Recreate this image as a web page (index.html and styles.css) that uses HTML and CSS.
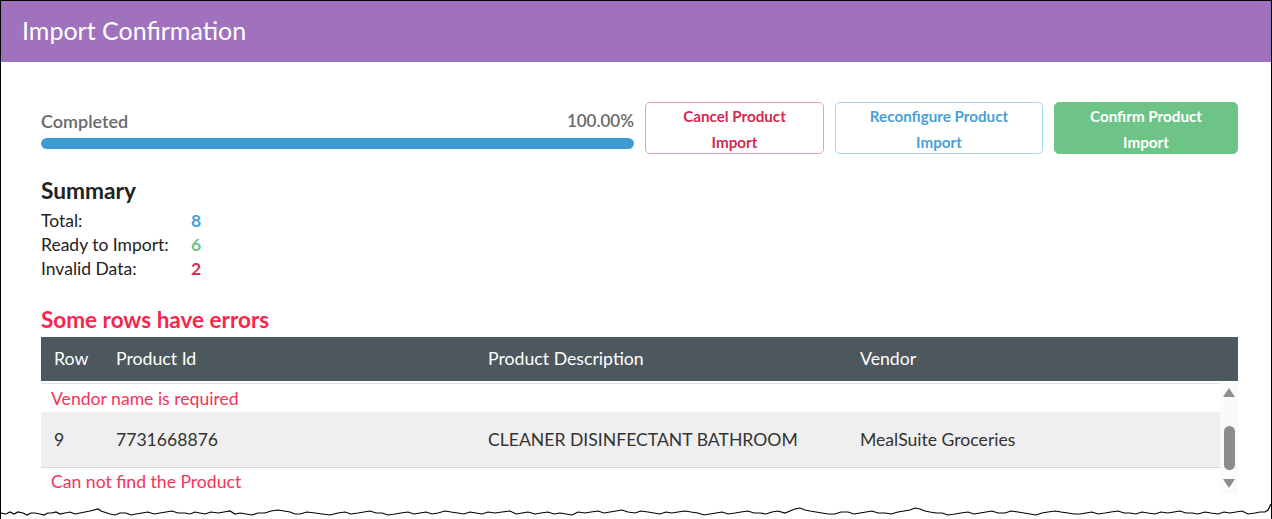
FILE: index.html
```html
<!DOCTYPE html>
<html>
<head>
<meta charset="utf-8">
<link rel="stylesheet" href="styles.css">
</head>
<body>
<div class="frame">
  <header class="titlebar">Import Confirmation</header>
  <main class="content">
    <section class="toprow">
      <div class="progress">
        <div class="progress-labels"><span>Completed</span><span>100.00%</span></div>
        <div class="bar"><div class="bar-fill"></div></div>
      </div>
      <button class="btn btn-cancel">Cancel Product<br>Import</button>
      <button class="btn btn-reconf">Reconfigure Product<br>Import</button>
      <button class="btn btn-confirm">Confirm Product<br>Import</button>
    </section>

    <h2 class="summary-title">Summary</h2>
    <dl class="summary">
      <dt>Total:</dt><dd class="v-blue">8</dd>
      <dt>Ready to Import:</dt><dd class="v-green">6</dd>
      <dt>Invalid Data:</dt><dd class="v-red">2</dd>
    </dl>

    <h2 class="errors-title">Some rows have errors</h2>

    <div class="table">
      <div class="thead row-grid">
        <div class="cell">Row</div>
        <div class="cell">Product Id</div>
        <div class="cell">Product Description</div>
        <div class="cell">Vendor</div>
      </div>
      <div class="scroll">
        <div class="scroll-body">
          <div class="err err-first">Vendor name is required</div>
          <div class="drow row-grid">
            <div class="cell">9</div>
            <div class="cell">7731668876</div>
            <div class="cell">CLEANER DISINFECTANT BATHROOM</div>
            <div class="cell">MealSuite Groceries</div>
          </div>
          <div class="err">Can not find the Product</div>
        </div>
        <div class="sbar">
          <div class="arrow-up"></div>
          <div class="thumb"></div>
          <div class="arrow-down"></div>
        </div>
      </div>
    </div>
  </main>
  <svg class="tear" viewBox="0 0 1272 19" width="1272" height="19" preserveAspectRatio="none">
    <polygon fill="#fff" points="0,12 6,13 10,11 14,13 18,11 23,12 27,14 31,12 35,12 40,13 44,14 48,12 52,12 56,11 60,13 65,12 70,11 75,13 80,12 85,11 90,10 94,9 98,8 101,10 104,11 110,13 115,14 120,12 126,12 131,14 136,13 142,12 148,11 154,13 160,12 166,11 172,10 178,12 185,12 190,13 195,11 200,12 205,13 211,11 218,12 224,11 230,10 235,13 240,12 246,13 252,14 258,12 265,12 271,10 278,9 284,10 290,11 295,13 300,13 307,11 315,12 322,13 330,14 338,12 345,11 351,13 358,12 364,11 370,10 376,12 382,12 388,14 395,13 401,12 408,11 414,13 420,12 426,11 432,13 438,12 445,10 451,11 458,12 464,13 470,11 476,12 482,13 488,11 495,12 502,11 510,10 516,13 522,12 528,11 535,13 541,12 548,11 554,13 560,12 566,13 572,14 578,11 585,12 591,11 598,10 604,12 610,11 616,10 622,9 628,11 635,12 641,10 648,11 654,12 660,13 666,11 672,12 678,11 685,10 691,11 698,12 704,14 710,13 716,12 722,11 728,13 735,12 741,11 748,10 754,12 760,12 766,13 772,11 778,10 785,12 790,10 795,8 800,7 805,9 810,10 816,11 822,12 828,13 835,13 841,11 848,11 854,13 860,12 866,11 872,10 878,12 885,12 891,13 898,11 904,10 910,9 915,7 920,8 925,10 930,11 936,12 942,12 948,14 955,13 961,12 968,11 974,13 980,12 986,11 992,10 998,12 1005,12 1011,10 1018,11 1024,12 1030,13 1036,14 1042,12 1048,11 1055,10 1061,11 1068,12 1074,13 1080,13 1086,12 1092,11 1098,13 1105,12 1111,11 1118,10 1124,12 1130,12 1136,13 1142,11 1148,12 1155,13 1161,11 1168,12 1174,11 1180,10 1186,12 1192,12 1198,13 1205,11 1211,12 1218,13 1224,11 1230,12 1236,11 1242,10 1248,13 1255,12 1260,11 1265,11 1268,9 1271,8 1272,19 0,19"/>
    <polyline fill="none" stroke="#000" stroke-width="1.2" points="0,12 6,13 10,11 14,13 18,11 23,12 27,14 31,12 35,12 40,13 44,14 48,12 52,12 56,11 60,13 65,12 70,11 75,13 80,12 85,11 90,10 94,9 98,8 101,10 104,11 110,13 115,14 120,12 126,12 131,14 136,13 142,12 148,11 154,13 160,12 166,11 172,10 178,12 185,12 190,13 195,11 200,12 205,13 211,11 218,12 224,11 230,10 235,13 240,12 246,13 252,14 258,12 265,12 271,10 278,9 284,10 290,11 295,13 300,13 307,11 315,12 322,13 330,14 338,12 345,11 351,13 358,12 364,11 370,10 376,12 382,12 388,14 395,13 401,12 408,11 414,13 420,12 426,11 432,13 438,12 445,10 451,11 458,12 464,13 470,11 476,12 482,13 488,11 495,12 502,11 510,10 516,13 522,12 528,11 535,13 541,12 548,11 554,13 560,12 566,13 572,14 578,11 585,12 591,11 598,10 604,12 610,11 616,10 622,9 628,11 635,12 641,10 648,11 654,12 660,13 666,11 672,12 678,11 685,10 691,11 698,12 704,14 710,13 716,12 722,11 728,13 735,12 741,11 748,10 754,12 760,12 766,13 772,11 778,10 785,12 790,10 795,8 800,7 805,9 810,10 816,11 822,12 828,13 835,13 841,11 848,11 854,13 860,12 866,11 872,10 878,12 885,12 891,13 898,11 904,10 910,9 915,7 920,8 925,10 930,11 936,12 942,12 948,14 955,13 961,12 968,11 974,13 980,12 986,11 992,10 998,12 1005,12 1011,10 1018,11 1024,12 1030,13 1036,14 1042,12 1048,11 1055,10 1061,11 1068,12 1074,13 1080,13 1086,12 1092,11 1098,13 1105,12 1111,11 1118,10 1124,12 1130,12 1136,13 1142,11 1148,12 1155,13 1161,11 1168,12 1174,11 1180,10 1186,12 1192,12 1198,13 1205,11 1211,12 1218,13 1224,11 1230,12 1236,11 1242,10 1248,13 1255,12 1260,11 1265,11 1268,9 1271,3"/>
  </svg>
</div>
</body>
</html>
```

FILE: styles.css
```css
* { box-sizing: border-box; }
html, body { margin: 0; padding: 0; background: #fff; }
body { font-family: Lato, "Open Sans", Arial, sans-serif; color: #222; }

.frame {
  position: relative;
  width: 1272px;
  height: 519px;
  border: 1px solid #000;
  border-bottom: none;
  overflow: hidden;
  background: #fff;
}

.titlebar {
  height: 61px;
  background: #a071bd;
  color: #fff;
  font-size: 25px;
  display: flex;
  align-items: center;
  padding-left: 21px;
  padding-bottom: 4px;
}

.content {
  padding: 40px 33px 0 40px;
}

.toprow {
  display: flex;
  gap: 11px;
  height: 52px;
}

.progress {
  flex: 1;
  display: flex;
  flex-direction: column;
  justify-content: flex-end;
  padding-bottom: 5px;
  gap: 6px;
}
.progress-labels {
  display: flex;
  justify-content: space-between;
  font-size: 18px;
  line-height: 22px;
  color: #6a6a6a;
  font-weight: 600;
}
.progress-labels span:last-child { font-size: 17px; }
.bar {
  height: 11px;
  border-radius: 6px;
  background: #e6e6e6;
  overflow: hidden;
}
.bar-fill {
  width: 100%;
  height: 100%;
  background: #3d9bd3;
  border-radius: 6px;
}

.btn {
  height: 52px;
  border-radius: 5px;
  border: 1px solid;
  background: #fff;
  font-family: inherit;
  font-size: 15.2px;
  font-weight: 700;
  line-height: 26px;
  padding: 0 0 2px;
  text-align: center;
}
.btn-cancel { width: 179px; border-color: #ee9cb0; color: #d4294f; }
.btn-reconf { width: 208px; border-color: #a9d3ee; color: #4a9fd8; }
.btn-confirm { width: 184px; border-color: #6dc486; background: #6dc486; color: #fff; }

.summary-title {
  margin: 23px 0 4px;
  font-size: 22.7px;
  line-height: 28px;
  font-weight: 700;
  color: #222;
}

.summary {
  margin: 0;
  display: grid;
  grid-template-columns: 150px auto;
  font-size: 17.5px;
  line-height: 24px;
}
.summary dt { margin: 0; color: #222; }
.summary dd { margin: 0; font-weight: 700; }
.v-blue { color: #4a9fd8; }
.v-green { color: #6cc486; }
.v-red { color: #d6305a; }

.errors-title {
  margin: 25px 0 3px;
  font-size: 22.5px;
  line-height: 28px;
  font-weight: 700;
  color: #f7264e;
}

.table { width: 100%; }

.row-grid {
  display: grid;
  grid-template-columns: 62px 372px 372px 1fr;
}
.cell { padding-left: 13px; }

.thead {
  height: 44px;
  background: #4d575e;
  color: #fff;
  font-size: 17.7px;
  align-items: center;
  padding-bottom: 1px;
}

.scroll {
  margin-top: 2px;
  height: 111px;
  display: flex;
  overflow: hidden;
}
.scroll-body {
  flex: 1;
  font-size: 17.6px;
}
.err {
  color: #f2345a;
  padding-left: 10px;
  height: 28px;
  line-height: 28px;
}
.err-first {
  border-top: 1px solid #dde2e5;
  height: 29px;
  line-height: 29px;
}
.drow {
  height: 56px;
  background: #efefef;
  border-bottom: 1px solid #d5dade;
  align-items: center;
  color: #333;
}

.sbar {
  width: 18px;
  background: #fafafa;
  display: flex;
  flex-direction: column;
  align-items: center;
  padding-top: 5px;
}
.arrow-up {
  width: 0; height: 0;
  border-left: 6px solid transparent;
  border-right: 6px solid transparent;
  border-bottom: 9px solid #8e8e8e;
}
.thumb {
  margin-top: 29px;
  width: 11px;
  height: 44px;
  border-radius: 6px;
  background: #8c8c8c;
}
.arrow-down {
  margin-top: 9px;
  width: 0; height: 0;
  border-left: 6px solid transparent;
  border-right: 6px solid transparent;
  border-top: 9px solid #8e8e8e;
}

.tear {
  position: absolute;
  left: -1px;
  top: 500px;
  display: block;
}
```
